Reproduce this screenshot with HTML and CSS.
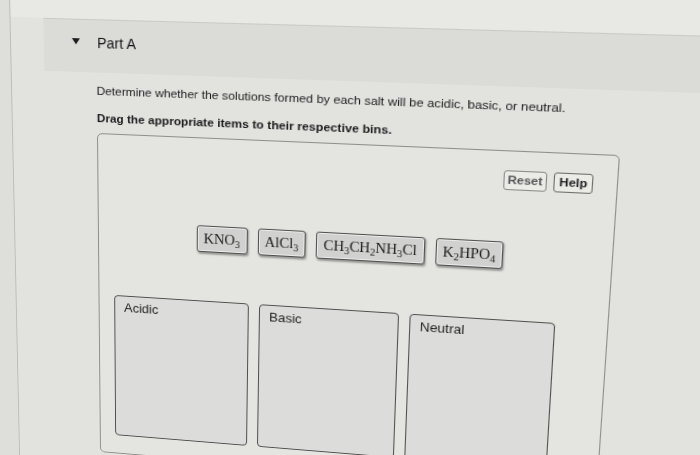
FILE: index.html
```
<!DOCTYPE html>
<html lang="en">
<head>
<meta charset="utf-8">
<title>Part A</title>
<link rel="stylesheet" href="styles.css">
</head>
<body>
<div class="screen">
  <div class="strip"></div>
  <div class="main">
    <div class="part-header">
      <span class="caret"></span>
      <span class="part-title">Part A</span>
    </div>
    <div class="content">
      <p class="prompt">Determine whether the solutions formed by each salt will be acidic, basic, or neutral.</p>
      <p class="instruction">Drag the appropriate items to their respective bins.</p>
      <div class="dnd">
        <div class="controls">
          <button class="btn btn-reset">Reset</button>
          <button class="btn btn-help">Help</button>
        </div>
        <div class="items">
          <div class="item">KNO<sub>3</sub></div>
          <div class="item">AlCl<sub>3</sub></div>
          <div class="item">CH<sub>3</sub>CH<sub>2</sub>NH<sub>3</sub>Cl</div>
          <div class="item">K<sub>2</sub>HPO<sub>4</sub></div>
        </div>
        <div class="bins">
          <div class="bin"><span class="bin-label">Acidic</span></div>
          <div class="bin"><span class="bin-label">Basic</span></div>
          <div class="bin"><span class="bin-label">Neutral</span></div>
        </div>
      </div>
    </div>
  </div>
</div>
</body>
</html>
```
FILE: styles.css
```
html, body {
  margin: 0;
  height: 100%;
  overflow: hidden;
  background: #dfdfdc;
}
body {
  font-family: "Liberation Sans", Arial, sans-serif;
  color: #1c1c1c;
}
.screen {
  display: flex;
  width: 820px;
  height: 640px;
  margin: -60px 0 0 -60px;
  transform-origin: 157px 193px;
  transform: matrix3d(1, 0.042061, 0, -0.00013314, 0.009397, 0.999185, 0, 0.00014717, 0, 0, 1, 0, 0, 0, 0, 1);
}
.strip {
  flex: none;
  width: 72px;
  box-sizing: border-box;
  border-right: 1px solid #bdbdba;
  background: #dededb;
}
.main {
  flex: 1;
  padding-top: 81px;
  background: linear-gradient(#e8e8e5 0, #e8e8e5 81px, #e2e2df 81px);
}
.part-header {
  display: flex;
  align-items: flex-start;
  height: 52px;
  box-sizing: border-box;
  margin-left: 33px;
  padding: 13px 0 0 28px;
  border-top: 1px solid #cacac7;
  background: #dbdbd8;
}
.caret {
  flex: none;
  width: 0;
  height: 0;
  margin-top: 4.5px;
  border-left: 4.5px solid transparent;
  border-right: 4.5px solid transparent;
  border-top: 6px solid #1c1c1c;
}
.part-title {
  margin-left: 17px;
  font-size: 14px;
  line-height: 18px;
  color: #151515;
}
.content {
  padding-left: 85px;
}
.prompt {
  margin: 10px 0 0;
  font-size: 11.8px;
  line-height: 16px;
}
.instruction {
  margin: 10.5px 0 0;
  font-size: 11.7px;
  line-height: 16px;
  font-weight: bold;
}
.dnd {
  width: 489px;
  height: 335px;
  box-sizing: border-box;
  margin-top: 7.5px;
  padding: 18px 21px 0 15px;
  border: 1px solid #8e8e8b;
  border-radius: 5px;
  background: #e4e4e1;
}
.controls {
  display: flex;
  justify-content: flex-end;
  gap: 6px;
}
.btn {
  height: 19px;
  box-sizing: border-box;
  padding: 0 4px;
  border: 1px solid #8a8a87;
  border-radius: 3px;
  background: #ebebe8;
  color: #555;
  font-family: "Liberation Sans", Arial, sans-serif;
  font-size: 11.5px;
  font-weight: bold;
  line-height: 17px;
}
.btn-reset {
  padding: 0 3px;
}
.btn-help {
  color: #1e1e1e;
  border-color: #6d6d6a;
}
.items {
  display: flex;
  justify-content: center;
  gap: 10px;
  margin-top: 50px;
  padding-left: 6px;
}
.item {
  height: 27px;
  box-sizing: border-box;
  padding: 0 6px;
  border: 1px solid #4e4e4c;
  border-radius: 3px;
  background: #d1d1cf;
  box-shadow: inset 0 0 0 1px #ececea, 1px 1.5px 2px rgba(0, 0, 0, 0.35);
  color: #1a1a1a;
  font-family: "Liberation Serif", "Times New Roman", serif;
  font-size: 14.2px;
  line-height: 25px;
  white-space: nowrap;
}
.item sub {
  font-size: 10px;
  line-height: 0;
  vertical-align: -3px;
}
.bins {
  display: flex;
  gap: 10px;
  margin-top: 50px;
}
.bin {
  width: 135px;
  height: 150px;
  box-sizing: border-box;
  padding: 3.5px 9px;
  border: 1px solid #4f4f4d;
  border-radius: 4px;
  background: #dcdcda;
  font-size: 13px;
  line-height: 16px;
  color: #1e1e1e;
}
```
